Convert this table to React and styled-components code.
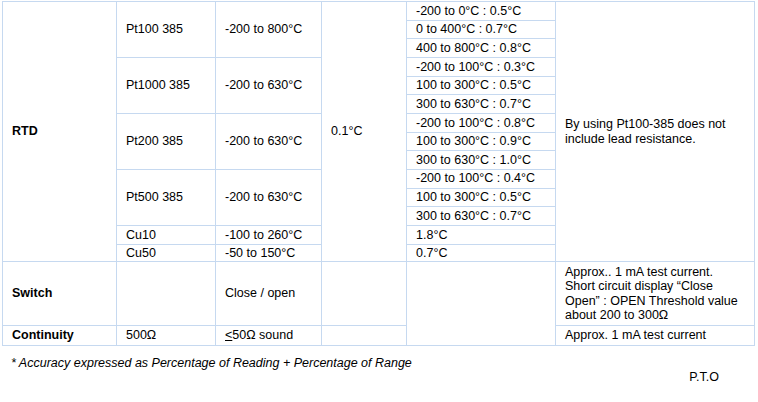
import React from "react";
import styled, { createGlobalStyle } from "styled-components";

const GlobalStyle = createGlobalStyle`
  html, body {
    margin: 0;
    padding: 0;
    background: #ffffff;
  }
  body {
    font-family: "Liberation Sans", Arial, sans-serif;
    color: #000000;
  }
`;

const Page = styled.div`
  width: 758px;
  height: 402px;
  display: flex;
  flex-direction: column;
  font-size: 12.5px;
`;

const Table = styled.table`
  margin: 1px 0 0 2px;
  width: 752px;
  border-collapse: collapse;
  table-layout: fixed;
`;

const Row = styled.tr`
  height: ${(p) => p.h}px;
`;

const Cell = styled.td`
  border: 1px solid #c6d9f0;
  padding: ${(p) => (p.tall ? "2px 4px 2px 9px" : "0 4px 0 9px")};
  vertical-align: middle;
  line-height: 14.5px;
  font-weight: ${(p) => (p.bold ? 700 : 400)};
  white-space: nowrap;
`;

const Under = styled.span`
  text-decoration: underline;
`;

const Footnote = styled.div`
  margin: 10px 0 0 11px;
  font-style: italic;
  line-height: 15px;
`;

const PtoRow = styled.div`
  display: flex;
  justify-content: flex-end;
  padding-right: 39px;
  margin-top: -1px;
  line-height: 15px;
`;

const sensors = [
  {
    name: "Pt100 385",
    range: "-200 to 800°C",
    acc: ["-200 to 0°C : 0.5°C", "0 to 400°C : 0.7°C", "400 to 800°C : 0.8°C"],
  },
  {
    name: "Pt1000 385",
    range: "-200 to 630°C",
    acc: ["-200 to 100°C : 0.3°C", "100 to 300°C : 0.5°C", "300 to 630°C : 0.7°C"],
  },
  {
    name: "Pt200 385",
    range: "-200 to 630°C",
    acc: ["-200 to 100°C : 0.8°C", "100 to 300°C : 0.9°C", "300 to 630°C : 1.0°C"],
  },
  {
    name: "Pt500 385",
    range: "-200 to 630°C",
    acc: ["-200 to 100°C : 0.4°C", "100 to 300°C : 0.5°C", "300 to 630°C : 0.7°C"],
  },
];

const SUB = 18.67;

export default function App() {
  const rtdRows = [];
  sensors.forEach((s, si) => {
    s.acc.forEach((a, ai) => {
      const first = si === 0 && ai === 0;
      rtdRows.push(
        <Row key={`${si}-${ai}`} h={SUB}>
          {first && (
            <Cell bold rowSpan={14}>
              RTD
            </Cell>
          )}
          {ai === 0 && <Cell rowSpan={3}>{s.name}</Cell>}
          {ai === 0 && <Cell rowSpan={3}>{s.range}</Cell>}
          {first && <Cell rowSpan={14}>0.1°C</Cell>}
          <Cell>{a}</Cell>
          {first && (
            <Cell rowSpan={14}>
              By using Pt100-385 does not
              <br />
              include lead resistance.
            </Cell>
          )}
        </Row>
      );
    });
  });

  return (
    <>
      <GlobalStyle />
      <Page>
        <Table>
          <colgroup>
            <col style={{ width: 114 }} />
            <col style={{ width: 99 }} />
            <col style={{ width: 106 }} />
            <col style={{ width: 85 }} />
            <col style={{ width: 149 }} />
            <col style={{ width: 199 }} />
          </colgroup>
          <tbody>
            {rtdRows}
            <Row h={19}>
              <Cell>Cu10</Cell>
              <Cell>-100 to 260°C</Cell>
              <Cell>1.8°C</Cell>
            </Row>
            <Row h={17.4}>
              <Cell>Cu50</Cell>
              <Cell>-50 to 150°C</Cell>
              <Cell>0.7°C</Cell>
            </Row>
            <Row h={63.6}>
              <Cell bold>Switch</Cell>
              <Cell />
              <Cell>Close / open</Cell>
              <Cell />
              <Cell rowSpan={2} />
              <Cell tall>
                Approx.. 1 mA test current.
                <br />
                Short circuit display “Close
                <br />
                Open” : OPEN Threshold value
                <br />
                about 200 to 300Ω
              </Cell>
            </Row>
            <Row h={20}>
              <Cell bold>Continuity</Cell>
              <Cell>500Ω</Cell>
              <Cell>
                <Under>&lt;</Under>50Ω sound
              </Cell>
              <Cell />
              <Cell>Approx. 1 mA test current</Cell>
            </Row>
          </tbody>
        </Table>
        <Footnote>
          * Accuracy expressed as Percentage of Reading + Percentage of Range
        </Footnote>
        <PtoRow>P.T.O</PtoRow>
      </Page>
    </>
  );
}
